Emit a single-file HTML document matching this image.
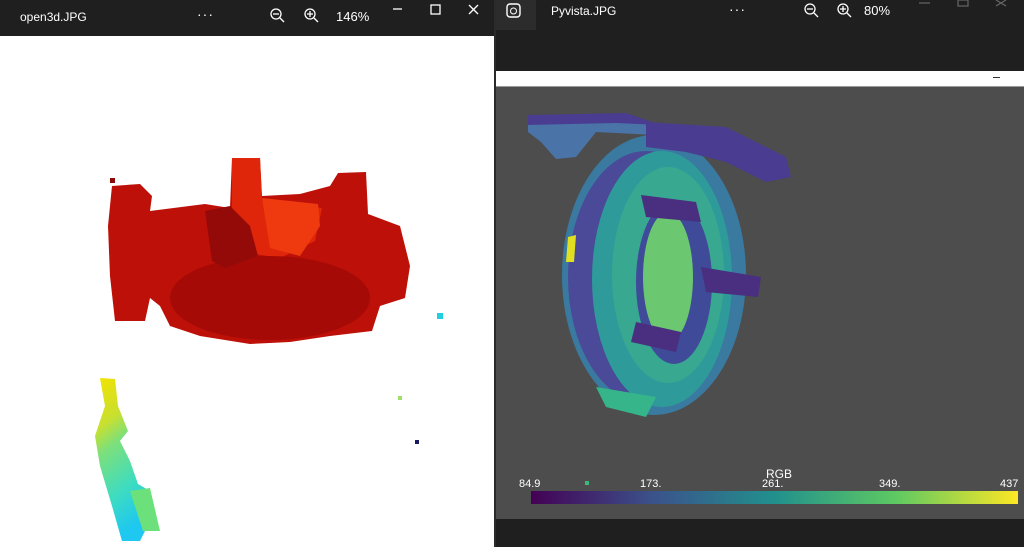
<!DOCTYPE html>
<html><head><meta charset="utf-8">
<style>
*{margin:0;padding:0;box-sizing:border-box}
body{width:1024px;height:547px;overflow:hidden;background:#1f1f1f;font-family:"Liberation Sans",sans-serif;position:relative}
.t{position:absolute;color:#fff;font-size:12px}
</style></head><body>
<div style="position:absolute;left:0;top:0;width:494px;height:36px;background:#1f1f1f"></div>
<div style="position:absolute;left:0;top:36px;width:494px;height:511px;background:#fff"></div>
<div class="t" style="left:20px;top:10px">open3d.JPG</div>
<div class="t" style="left:197px;top:6px;font-size:14px;letter-spacing:1px">···</div>
<div class="t" style="left:336px;top:9px;font-size:13px">146%</div>
<svg style="position:absolute;left:0;top:0" width="494" height="36">
<g stroke="#fff" stroke-width="1.3" fill="none">
<circle cx="276" cy="14" r="5"/><line x1="280" y1="18" x2="284" y2="22"/><line x1="273" y1="14" x2="279" y2="14"/>
<circle cx="310" cy="14" r="5"/><line x1="314" y1="18" x2="318" y2="22"/><line x1="307" y1="14" x2="313" y2="14"/><line x1="310" y1="11" x2="310" y2="17"/>
<line x1="393" y1="9" x2="402" y2="9"/>
<rect x="431" y="5" width="9" height="9"/>
<line x1="469" y1="5" x2="478" y2="14"/><line x1="478" y1="5" x2="469" y2="14"/>
</g>
</svg>
<svg style="position:absolute;left:0;top:36px" width="494" height="511">
<defs><linearGradient id="cy" x1="0" y1="0" x2="0.3" y2="1"><stop offset="0" stop-color="#f4e200"/><stop offset="0.3" stop-color="#c8e030"/><stop offset="0.45" stop-color="#7de07a"/><stop offset="0.75" stop-color="#3edcc0"/><stop offset="1" stop-color="#1ec8f0"/></linearGradient></defs>
<path d="M112 150 L140 148 L152 160 L150 175 L205 168 L230 172 L232 122 L260 122 L262 160 L300 158 L330 150 L338 137 L366 136 L368 178 L400 190 L410 230 L405 262 L380 270 L372 295 L330 300 L290 306 L250 308 L200 300 L170 290 L160 270 L150 262 L145 285 L115 285 L110 240 L108 190Z" fill="#bd1008"/>
<path d="M232 122 L260 122 L262 165 L300 168 L322 172 L315 205 L280 222 L255 218 L240 185 L232 172Z" fill="#e0260a"/>
<path d="M262 162 L318 168 L320 190 L300 220 L270 212Z" fill="#ee3a0e"/>
<ellipse cx="270" cy="262" rx="100" ry="42" fill="#a50a06"/>
<path d="M205 175 L230 170 L250 190 L258 220 L225 232 L212 225Z" fill="#940a08"/>
<rect x="110" y="142" width="5" height="5" fill="#8a0a08"/>
<rect x="437" y="277" width="6" height="6" fill="#1fd0e0"/>
<rect x="398" y="360" width="4" height="4" fill="#9ee06a"/>
<rect x="415" y="404" width="4" height="4" fill="#1a1a60"/>
<path d="M100 342 L115 343 L118 370 L128 395 L120 405 L130 425 L138 448 L150 455 L158 490 L145 495 L140 505 L122 505 L112 470 L100 430 L95 400 L100 385 L105 370Z" fill="url(#cy)"/>
<path d="M130 455 L150 452 L160 495 L143 495Z" fill="#6ce07a"/>
</svg>
<div style="position:absolute;left:494px;top:0;width:2px;height:547px;background:#2b2b2b"></div>
<div style="position:absolute;left:496px;top:0;width:40px;height:30px;background:#2c2c2c"></div>
<svg style="position:absolute;left:505px;top:2px" width="18" height="18"><rect x="2" y="2" width="13" height="13" rx="3" stroke="#fff" stroke-width="1.4" fill="none"/><circle cx="8.5" cy="9" r="3" stroke="#fff" fill="none"/></svg>
<div class="t" style="left:551px;top:4px">Pyvista.JPG</div>
<div class="t" style="left:729px;top:1px;font-size:14px;letter-spacing:1px">···</div>
<div class="t" style="left:864px;top:3px;font-size:13px">80%</div>
<svg style="position:absolute;left:494px;top:0" width="530" height="36">
<g stroke="#fff" stroke-width="1.3" fill="none">
<circle cx="316" cy="9" r="5"/><line x1="320" y1="13" x2="324" y2="17"/><line x1="313" y1="9" x2="319" y2="9"/>
<circle cx="349" cy="9" r="5"/><line x1="353" y1="13" x2="357" y2="17"/><line x1="346" y1="9" x2="352" y2="9"/><line x1="349" y1="6" x2="349" y2="12"/>
</g>
<g stroke="#666" stroke-width="1.2" fill="none"><line x1="425" y1="3" x2="436" y2="3"/><rect x="464" y="0" width="10" height="6"/><line x1="502" y1="0" x2="512" y2="6"/><line x1="512" y1="0" x2="502" y2="6"/></g>
</svg>
<div style="position:absolute;left:496px;top:71px;width:528px;height:15px;background:#fff"></div>
<div style="position:absolute;left:993px;top:77px;width:7px;height:1px;background:#333"></div>
<div style="position:absolute;left:496px;top:86px;width:528px;height:1px;background:#999"></div>
<div style="position:absolute;left:496px;top:87px;width:528px;height:432px;background:#4d4d4d"></div>
<svg style="position:absolute;left:496px;top:87px" width="528" height="432">
<path d="M32 30 L130 28 L165 40 L160 48 L100 45 L80 70 L60 72 L45 55 L32 45Z" fill="#4a74a8"/>
<path d="M32 28 L130 26 L165 38 L120 36 L32 38Z" fill="#4a3c90"/>
<ellipse cx="158" cy="188" rx="92" ry="140" fill="#3a7aa0"/>
<ellipse cx="150" cy="190" rx="78" ry="126" fill="#4a4a98"/>
<ellipse cx="166" cy="192" rx="70" ry="128" fill="#2f9a9a"/>
<ellipse cx="172" cy="188" rx="56" ry="108" fill="#38a890"/>
<ellipse cx="178" cy="195" rx="38" ry="82" fill="#3f4a98"/>
<ellipse cx="172" cy="190" rx="25" ry="65" fill="#6cc870"/>
<path d="M150 35 L230 40 L290 70 L295 90 L270 95 L230 75 L190 65 L150 60Z" fill="#4a3c90"/>
<path d="M145 108 L200 115 L205 135 L150 130Z" fill="#4a2e80"/>
<path d="M205 180 L265 190 L262 210 L210 205Z" fill="#4a2e80"/>
<path d="M140 235 L185 245 L180 265 L135 255Z" fill="#4a2e80"/>
<path d="M72 150 L80 148 L78 175 L70 175Z" fill="#e0e020"/>
<path d="M100 300 L160 310 L150 330 L110 320Z" fill="#36b48a"/>
</svg>
<div style="position:absolute;left:766px;top:467px;color:#fff;font-size:12px">RGB</div>
<div style="position:absolute;left:519px;top:478px;color:#fff;font-size:11px">84.9</div>
<div style="position:absolute;left:640px;top:478px;color:#fff;font-size:11px">173.</div>
<div style="position:absolute;left:762px;top:478px;color:#fff;font-size:11px">261.</div>
<div style="position:absolute;left:879px;top:478px;color:#fff;font-size:11px">349.</div>
<div style="position:absolute;left:1000px;top:478px;color:#fff;font-size:11px">437</div>
<div style="position:absolute;left:585px;top:481px;width:4px;height:4px;background:#3cb878"></div>
<div style="position:absolute;left:531px;top:491px;width:487px;height:13px;background:linear-gradient(90deg,#440154,#3b528b 25%,#21908d 50%,#5ec962 75%,#fde725)"></div>
<div style="position:absolute;left:496px;top:519px;width:528px;height:28px;background:#1f1f1f"></div>
</body></html>
